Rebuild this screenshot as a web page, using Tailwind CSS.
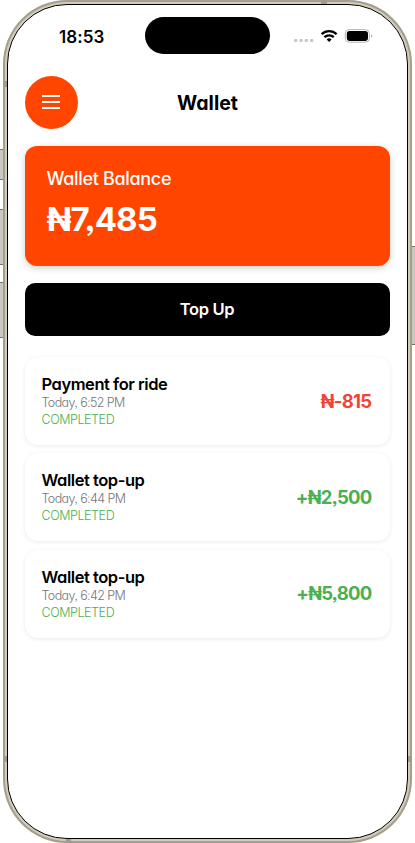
<!DOCTYPE html>
<html lang="en">
<head>
<meta charset="utf-8">
<title>Wallet</title>
<script src="https://cdn.jsdelivr.net/npm/@tailwindcss/browser@4"></script>
</head>
<body class="bg-white font-[Inter,'Noto_Sans',sans-serif] [font-feature-settings:'cv11','ss03'] whitespace-nowrap">
<div class="relative w-[415px] h-[843px] overflow-hidden px-[3px]">
  <!-- hardware buttons -->
  <div class="absolute left-0 top-[149px] w-1 h-[31px] border-y border-[#77746d] bg-[#cbc8bf]"></div>
  <div class="absolute left-0 top-[209px] w-1 h-[56px] border-y border-[#77746d] bg-[#cbc8bf]"></div>
  <div class="absolute left-0 top-[282px] w-1 h-[56px] border-y border-[#77746d] bg-[#cbc8bf]"></div>
  <div class="absolute right-0 top-[246px] w-1 h-[99px] border-y border-[#77746d] bg-[#cbc8bf]"></div>

  <div class="relative w-[409px] h-[843px] rounded-[64px] bg-[#a39e90] p-[2px] overflow-hidden">
    <div class="absolute left-0 top-[81px] w-1 h-[6px] bg-[#a09b8b] z-10"></div>
    <div class="absolute left-0 top-[756px] w-1 h-[6px] bg-[#a09b8b] z-10"></div>
    <div class="absolute right-0 top-[756px] w-1 h-[6px] bg-[#a09b8b] z-10"></div>
    <div class="absolute left-[318px] top-0 w-[6px] h-1 bg-[#a09b8b] z-10"></div>
    <div class="absolute left-[63px] bottom-0 w-[5px] h-1 bg-[#a09b8b] z-10"></div>
    <div class="h-full rounded-[62px] bg-[#d0ccb9] p-[2px]">
      <div class="h-full rounded-[60px] bg-white border border-black px-[17px] flex flex-col">

        <!-- status bar -->
        <div class="relative h-[67px] -mx-[17px] flex items-start">
          <div class="ml-[51px] mt-[19.5px] text-[17px] leading-[24px] font-semibold tracking-[0.1px]">18:53</div>
          <div class="absolute left-[137px] top-[12px] w-[125px] h-[37px] rounded-full bg-black"></div>
          <svg class="absolute left-[285px] top-[22px]" width="84" height="18" viewBox="0 0 84 18">
            <g fill="#c8c8c8"><rect x="1" y="12" width="3.4" height="3" rx="1"/><rect x="6.3" y="12" width="3.4" height="3" rx="1"/><rect x="11.6" y="12" width="3.4" height="3" rx="1"/><rect x="17" y="12" width="3.4" height="3" rx="1"/></g>
            <g fill="none" stroke="#000" stroke-width="2.3"><path d="M28.6 7.1a10.7 10.7 0 0 1 15 0"/><path d="M31.4 10.2a6.8 6.8 0 0 1 9.4 0"/></g>
            <path d="M33.6 12.4a3.8 3.8 0 0 1 5 0L36.1 15z" fill="#000"/>
            <rect x="52.2" y="2.6" width="24.2" height="12.6" rx="4" fill="#fff" stroke="#b5b5b5"/>
            <rect x="53.8" y="4" width="21.2" height="9.9" rx="2.8" fill="#000"/>
            <path d="M78 7.2c1.6.6 1.6 3 0 3.6z" fill="#aaa"/>
          </svg>
        </div>

        <!-- header -->
        <div class="relative flex items-center justify-center h-[61px] pt-1 pb-1">
          <div class="absolute left-0 top-[4px] size-[53px] rounded-full bg-[#ff4500] flex flex-col items-center justify-center gap-[4px] pr-px pb-px">
            <div class="w-[18px] h-[2px] bg-white"></div>
            <div class="w-[18px] h-[2px] bg-white"></div>
            <div class="w-[18px] h-[2px] bg-white"></div>
          </div>
          <div class="text-[19.5px] leading-6 font-bold">Wallet</div>
        </div>

        <!-- balance -->
        <div class="mt-[13px] h-[120px] shrink-0 rounded-[12px] bg-[#ff4500] text-white pl-[21.5px] pt-[21px] shadow-[0_2px_7px_rgba(0,0,0,0.2)]">
          <div class="text-[18px] leading-6 font-medium tracking-[-0.33px]">Wallet Balance</div>
          <div class="mt-[8px] text-[33px] leading-[40px] font-bold tracking-[-0.95px]">₦7,485</div>
        </div>
        <div class="mt-[16.5px] h-[53.5px] shrink-0 rounded-[10px] bg-black text-white flex items-center justify-center pr-px text-[16.5px] font-semibold tracking-[-0.3px]">Top Up</div>

        <!-- transactions -->
        <div class="mt-[21px] flex flex-col gap-[8.3px]">
          <div class="h-[88px] rounded-[13px] bg-white shadow-[0_1px_4px_rgba(0,0,0,0.09)] flex items-center justify-between pl-[16.5px] pr-[18.5px]">
            <div class="pt-[2px]">
              <div class="text-[16.5px] leading-[19px] font-semibold tracking-[-0.45px]">Payment for ride</div>
              <div class="text-[12.5px] leading-[17px] font-light tracking-[-0.6px] text-[#777]">Today, 6:52 PM</div>
              <div class="text-[12.5px] leading-[18px] font-light tracking-[-0.43px] text-[#4caf50]">COMPLETED</div>
            </div>
            <div class="text-[18.5px] pt-px font-bold tracking-[-0.7px] text-[#f44336]">₦-815</div>
          </div>
          <div class="h-[88px] rounded-[13px] bg-white shadow-[0_1px_4px_rgba(0,0,0,0.09)] flex items-center justify-between pl-[16.5px] pr-[18.5px]">
            <div class="pt-[2px]">
              <div class="text-[16.5px] leading-[19px] font-semibold tracking-[-0.45px]">Wallet top-up</div>
              <div class="text-[12.5px] leading-[17px] font-light tracking-[-0.6px] text-[#777]">Today, 6:44 PM</div>
              <div class="text-[12.5px] leading-[18px] font-light tracking-[-0.43px] text-[#4caf50]">COMPLETED</div>
            </div>
            <div class="text-[18.5px] pt-px font-bold tracking-[-0.75px] text-[#4caf50]">+₦2,500</div>
          </div>
          <div class="h-[88px] rounded-[13px] bg-white shadow-[0_1px_4px_rgba(0,0,0,0.09)] flex items-center justify-between pl-[16.5px] pr-[18.5px]">
            <div class="pt-[2px]">
              <div class="text-[16.5px] leading-[19px] font-semibold tracking-[-0.45px]">Wallet top-up</div>
              <div class="text-[12.5px] leading-[17px] font-light tracking-[-0.6px] text-[#777]">Today, 6:42 PM</div>
              <div class="text-[12.5px] leading-[18px] font-light tracking-[-0.43px] text-[#4caf50]">COMPLETED</div>
            </div>
            <div class="text-[18.5px] pt-px font-bold tracking-[-0.75px] text-[#4caf50]">+₦5,800</div>
          </div>
        </div>
      </div>
    </div>
  </div>
</div>
</body>
</html>
